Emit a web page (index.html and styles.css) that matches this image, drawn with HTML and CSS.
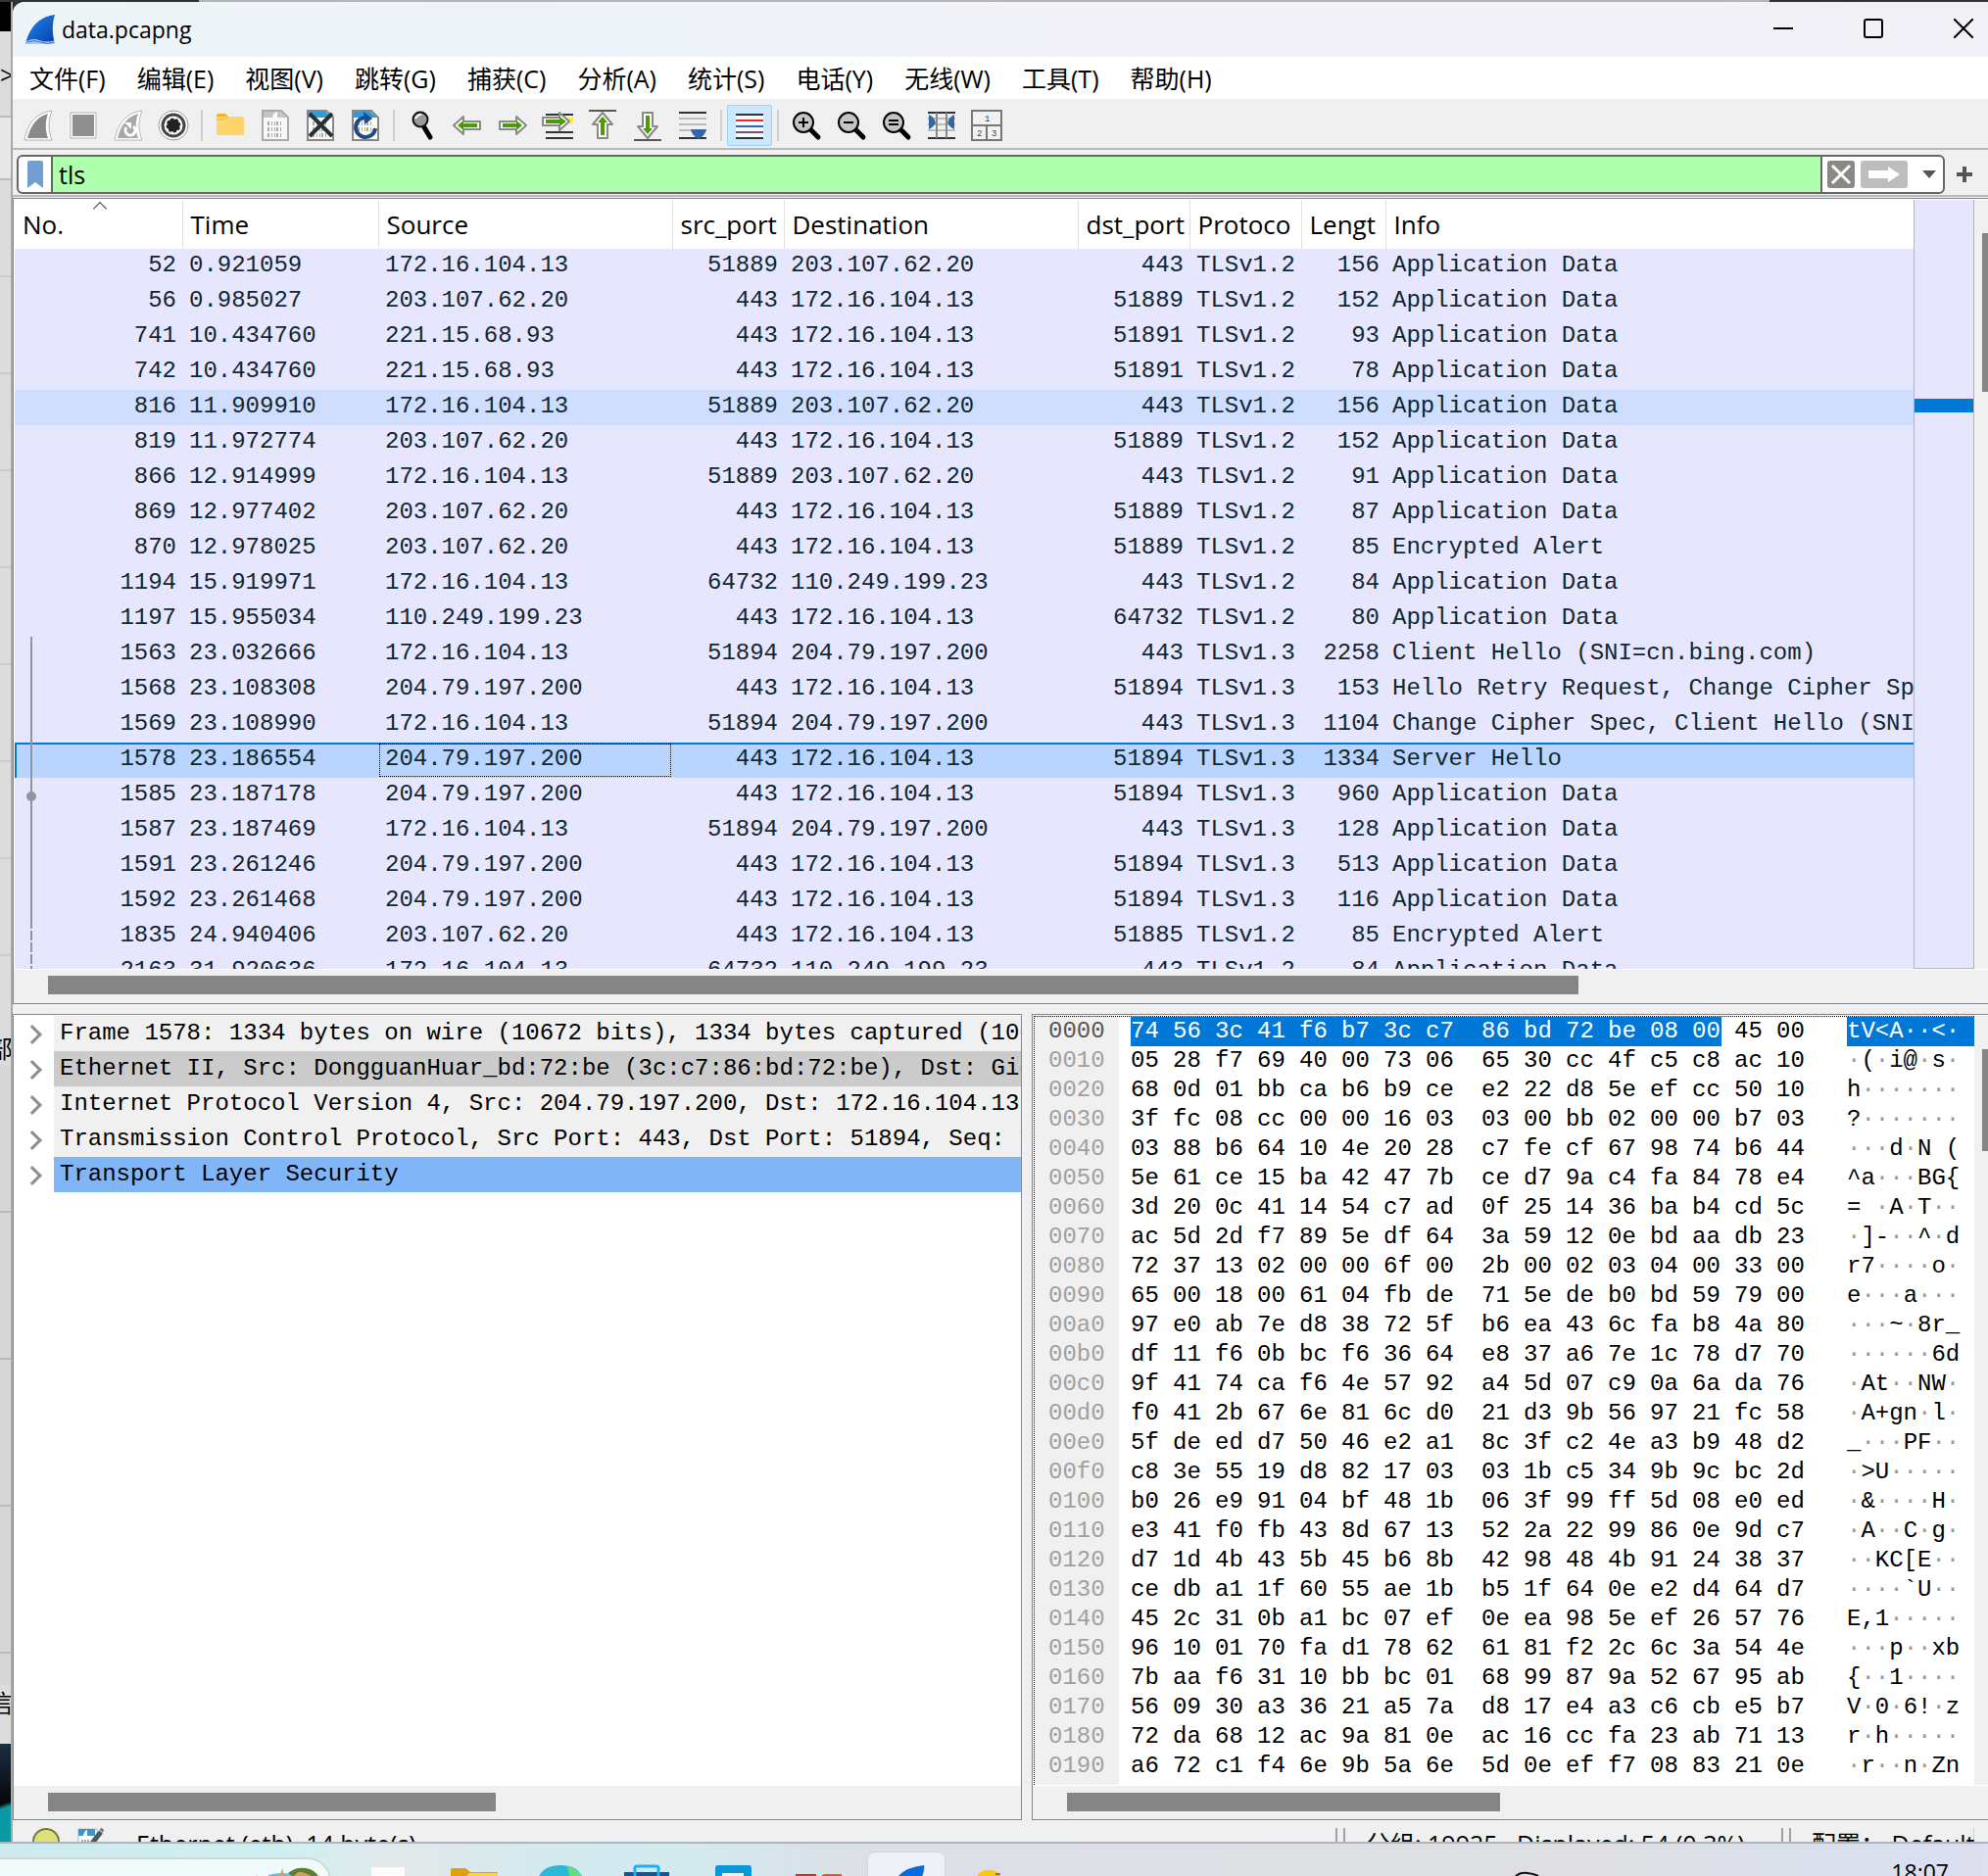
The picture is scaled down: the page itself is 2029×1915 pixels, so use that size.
FILE: index.html
```html
<!DOCTYPE html>
<html lang="zh-CN">
<head>
    <meta charset="UTF-8">
    <meta name="viewport" content="width=device-width, initial-scale=1.0">
    <title>data.pcapng</title>
    <link rel="stylesheet" href="styles.css">
</head>
<body>
    <div class="desktop">
        <div class="behind">
            <div class="behind-dark"></div>
            <div class="behind-tab">&gt;</div>
            <div class="behind-line"></div>
            <div class="behind-rows"></div>
            <div class="behind-text">部</div>
            <div class="behind-page"></div>
            <div class="behind-text">信</div>
            <div class="behind-photo"></div>
        </div>

        <main class="window">
            <header class="titlebar">
                <svg class="app-icon" viewBox="0 0 32 32">
                    <defs>
                        <linearGradient id="fin" x1="0" y1="0" x2="1" y2="1">
                            <stop offset="0" stop-color="#1c8cf5"/>
                            <stop offset="1" stop-color="#0a3ba8"/>
                        </linearGradient>
                    </defs>
                    <path d="M0 31C4 14 14 2 31 0C28 9 28 20 31 31Z" fill="url(#fin)"/>
                    <path d="M1 28Q8 24 15 27T31 27V31H0Z" fill="#a9c6ef"/>
                    <path d="M2 29Q9 26 16 29T30 29" fill="none" stroke="#3c6fd0"/>
                </svg>
                <h1>data.pcapng</h1>
                <div class="window-buttons">
                    <button aria-label="最小化"><svg viewBox="0 0 20 20"><path d="M0 10H20" stroke="#000" stroke-width="2"/></svg></button>
                    <button aria-label="最大化"><svg viewBox="0 0 20 20"><rect x="1" y="1" width="18" height="18" rx="2" fill="none" stroke="#000" stroke-width="2"/></svg></button>
                    <button aria-label="关闭"><svg viewBox="0 0 20 20"><path d="M0 0L20 20M20 0L0 20" stroke="#000" stroke-width="2"/></svg></button>
                </div>
            </header>

            <nav class="menubar">
                <button>文件(F)</button>
                <button>编辑(E)</button>
                <button>视图(V)</button>
                <button>跳转(G)</button>
                <button>捕获(C)</button>
                <button>分析(A)</button>
                <button>统计(S)</button>
                <button>电话(Y)</button>
                <button>无线(W)</button>
                <button>工具(T)</button>
                <button>帮助(H)</button>
            </nav>

            <div class="toolbar">
                <button aria-label="开始捕获"><svg viewBox="0 0 32 32"><path d="M2 31C5 14 14 3 30 1C26 11 26 21 30 31Z" fill="#fff" stroke="#b0b0b0"/><path d="M5 29C8 16 15 7 26 4C23 12 23 21 26 29Z" fill="#8a8a8a"/></svg></button>
                <button aria-label="停止捕获"><svg viewBox="0 0 32 32"><rect x="3" y="3" width="26" height="26" fill="#fff" stroke="#b0b0b0"/><rect x="5" y="5" width="22" height="22" fill="#8f8f8f"/></svg></button>
                <button aria-label="重新开始"><svg viewBox="0 0 32 32"><path d="M2 31C5 14 14 3 30 1C26 11 26 21 30 31Z" fill="#fff" stroke="#b8b8b8"/><path d="M5 29C8 16 15 7 26 4C23 12 23 21 26 29Z" fill="#a8a8a8"/><path d="M14 18A5 5 0 1 0 21 17" fill="none" stroke="#fff" stroke-width="3"/><path d="M12 13H19V20Z" fill="#fff"/></svg></button>
                <button aria-label="捕获选项"><svg viewBox="0 0 32 32"><circle cx="16" cy="16" r="15" fill="#fff" stroke="#9a9a9a"/><circle cx="16" cy="16" r="12.5" fill="#444"/><circle cx="16" cy="16" r="8.5" fill="#222" stroke="#fff" stroke-width="2"/><circle cx="16" cy="16" r="7.5" fill="none" stroke="#fff" stroke-width="2" stroke-dasharray="2.5 3.39"/></svg></button>
                <span class="separator"></span>
                <button aria-label="打开"><svg viewBox="0 0 32 32"><path d="M2 6Q2 4 4 4H11L14 7V12H2Z" fill="#f5b325"/><rect x="2" y="7" width="28" height="19" rx="1" fill="#fdd56b"/><path d="M2 10H10L14 7" fill="none" stroke="#f3b63b"/></svg></button>
                <button aria-label="保存"><svg viewBox="0 0 32 32"><path d="M3 1H22L29 8V31H3Z" fill="#f8f8f8" stroke="#aaa" stroke-width="2"/><path d="M4 2H21L28 8H4Z" fill="#c4c4c4"/><path d="M13 8Q14 3 18 2V8Z" fill="#fff"/><g fill="none" stroke="#aaa" stroke-width="4" stroke-dasharray="2 2 1 2 1 1"><path d="M8 14H24"/><path d="M8 20H24"/><path d="M8 26H24"/></g></svg></button>
                <button aria-label="关闭文件"><svg viewBox="0 0 32 32"><path d="M3 1H22L29 8V31H3Z" fill="#fcfcf0" stroke="#888" stroke-width="2"/><path d="M4 2H21L28 8H4Z" fill="#2e9bd8"/><g fill="none" stroke="#aaa" stroke-width="4" stroke-dasharray="2 2 1 2 1 1"><path d="M8 14H24"/><path d="M8 20H24"/><path d="M8 26H24"/></g><path d="M5 4L28 27M28 4L5 27" stroke="#263238" stroke-width="4"/></svg></button>
                <button aria-label="重新加载"><svg viewBox="0 0 32 32"><path d="M3 1H22L29 8V31H3Z" fill="#fcfcf0" stroke="#888" stroke-width="2"/><path d="M4 2H21L28 8H4Z" fill="#2e9bd8"/><g fill="none" stroke="#aaa" stroke-width="4" stroke-dasharray="2 2 1 2 1 1"><path d="M8 14H24"/><path d="M8 20H24"/></g><path d="M17 8A10 10 0 1 0 26 19" fill="none" stroke="#204a87" stroke-width="4"/><path d="M14 2L23 9L15 15Z" fill="#204a87"/></svg></button>
                <span class="separator"></span>
                <button aria-label="查找"><svg viewBox="0 0 32 32"><path d="M18 18L24 28" stroke="#000" stroke-width="5" stroke-linecap="round"/><circle cx="14" cy="10" r="7.5" fill="#999" stroke="#111" stroke-width="2"/><path d="M9 9Q11 5 15 5" fill="none" stroke="#fff" stroke-width="2"/></svg></button>
                <button aria-label="上一分组"><svg viewBox="0 0 32 32"><path d="M2 16L12 7V12H29V20H12V25Z" fill="#fff" stroke="#888a85" stroke-width="2" stroke-linejoin="round"/><path d="M6 16L12 11V14H26V18H12V21Z" fill="#4e9a06"/></svg></button>
                <button aria-label="下一分组"><svg viewBox="0 0 32 32"><path d="M30 16L20 7V12H3V20H20V25Z" fill="#fff" stroke="#888a85" stroke-width="2" stroke-linejoin="round"/><path d="M26 16L20 11V14H6V18H20V21Z" fill="#4e9a06"/></svg></button>
                <button aria-label="转到分组"><svg viewBox="0 0 32 32"><path d="M4 5H32M4 23H32M4 29H32" stroke="#2e3436" stroke-width="2"/><rect x="22" y="8" width="10" height="6" fill="#fce94f"/><path d="M28 12L18 3V8H1V16H18V21Z" fill="#fff" stroke="#888a85" stroke-width="2" stroke-linejoin="round"/><path d="M25 12L18 7V10H4V14H18V17Z" fill="#4e9a06"/></svg></button>
                <button aria-label="首个分组"><svg viewBox="0 0 32 32"><path d="M2 1H30" stroke="#555753" stroke-width="2"/><path d="M16 3L26 15H21V29H11V15H6Z" fill="#fff" stroke="#888a85" stroke-width="2" stroke-linejoin="round"/><path d="M16 7L21 13H18V26H14V13H11Z" fill="#4e9a06"/></svg></button>
                <button aria-label="最后分组"><svg viewBox="0 0 32 32"><path d="M2 31H30" stroke="#555753" stroke-width="2"/><path d="M16 29L26 17H21V3H11V17H6Z" fill="#fff" stroke="#888a85" stroke-width="2" stroke-linejoin="round"/><path d="M16 25L21 19H18V6H14V19H11Z" fill="#4e9a06"/></svg></button>
                <button aria-label="自动滚动"><svg viewBox="0 0 32 32"><path d="M2 3H30M2 29H30" stroke="#2e3436" stroke-width="2"/><path d="M2 9H30M2 15H30M2 21H30" stroke="#babdb6" stroke-width="2"/><path d="M14 20H30Q29 26 22 30Q15 26 14 20Z" fill="#3465a4"/></svg></button>
                <span class="separator"></span>
                <button class="checked" aria-label="着色"><svg viewBox="0 0 32 32"><rect x="2" y="4" width="28" height="26" fill="#f4f9fd"/><path d="M2 5H30M2 29H30" stroke="#2e3436" stroke-width="2"/><path d="M2 11H30" stroke="#ef2929" stroke-width="2"/><path d="M2 17H30" stroke="#3465a4" stroke-width="2"/><path d="M2 23H30" stroke="#75507b" stroke-width="2"/></svg></button>
                <span class="separator"></span>
                <button aria-label="放大"><svg viewBox="0 0 32 32"><path d="M20 20L28 28" stroke="#000" stroke-width="5" stroke-linecap="round"/><circle cx="13" cy="13" r="10" fill="#c4c4c4" stroke="#000" stroke-width="2"/><path d="M8 13H18M13 8V18" stroke="#000" stroke-width="2"/></svg></button>
                <button aria-label="缩小"><svg viewBox="0 0 32 32"><path d="M20 20L28 28" stroke="#000" stroke-width="5" stroke-linecap="round"/><circle cx="13" cy="13" r="10" fill="#c4c4c4" stroke="#000" stroke-width="2"/><path d="M8 13H18" stroke="#000" stroke-width="2"/></svg></button>
                <button aria-label="正常大小"><svg viewBox="0 0 32 32"><path d="M20 20L28 28" stroke="#000" stroke-width="5" stroke-linecap="round"/><circle cx="13" cy="13" r="10" fill="#c4c4c4" stroke="#000" stroke-width="2"/><path d="M8 11H18M8 15H18" stroke="#000" stroke-width="2"/></svg></button>
                <button aria-label="调整列宽"><svg viewBox="0 0 32 32"><path d="M2 9H30M2 15H30M2 21H30" stroke="#babdb6" stroke-width="2"/><path d="M2 3H30M2 29H30" stroke="#2e3436" stroke-width="2"/><path d="M11 3V29M21 3V29" stroke="#888a85" stroke-width="2"/><path d="M3 5Q8 7 10 13Q8 18 3 20ZM29 5Q24 7 22 13Q24 18 29 20Z" fill="#3465a4"/></svg></button>
                <button aria-label="布局"><svg viewBox="0 0 32 32"><path d="M1 1H31V31H1ZM1 16H31M16 16V31" fill="#f2f2f2" stroke="#777" stroke-width="2"/><text x="14" y="12">1</text><text x="6" y="27">2</text><text x="21" y="27">3</text></svg></button>
            </div>

            <form class="filterbar">
                <div class="filter-box">
                    <button type="button" class="bookmark" aria-label="书签"><svg viewBox="0 0 16 28"><path d="M0 2Q0 0 2 0H14Q16 0 16 2V28L8 22L0 28Z" fill="#729fcf"/></svg></button>
                    <input type="text" value="tls" aria-label="显示过滤器">
                    <button type="button" class="clear" aria-label="清除"><svg viewBox="0 0 28 28"><rect width="28" height="28" rx="3" fill="#888a85"/><path d="M5 5L23 23M23 5L5 23" stroke="#fff" stroke-width="3"/></svg></button>
                    <button type="button" class="apply" aria-label="应用"><svg viewBox="0 0 48 28"><rect width="48" height="28" rx="3" fill="#bdbdbd"/><path d="M8 10H28V6L40 14L28 22V18H8Z" fill="#fff"/></svg></button>
                    <button type="button" class="history" aria-label="历史"><svg viewBox="0 0 14 8"><path d="M0 0H14L7 8Z" fill="#555"/></svg></button>
                </div>
                <button type="button" class="add" aria-label="添加"><svg viewBox="0 0 16 16"><path d="M8 0V16M0 8H16" stroke="#555" stroke-width="4"/></svg></button>
            </form>

            <div class="panes">
                <section class="pane packet-pane">
                    <div class="pane-view">
                        <div class="packet-list">
                            <table>
                                <colgroup>
                                    <col class="c-no"><col class="c-time"><col class="c-addr"><col class="c-port"><col class="c-addr"><col class="c-port"><col class="c-proto"><col class="c-len"><col>
                                </colgroup>
                                <thead>
                                    <tr><th class="sorted">No.</th><th>Time</th><th>Source</th><th>src_port</th><th>Destination</th><th>dst_port</th><th>Protoco</th><th>Lengt</th><th>Info</th></tr>
                                </thead>
                                <tbody id="packets"></tbody>
                            </table>
                            <svg class="related" viewBox="0 0 12 340">
                                <path d="M6 0V298" stroke="#8b979c" stroke-width="2"/>
                                <path d="M6 300V340" stroke="#8b979c" stroke-width="2" stroke-dasharray="10 2"/>
                                <circle cx="6" cy="163" r="5" fill="#8b979c"/>
                            </svg>
                        </div>
                        <div class="minimap"><span></span></div>
                        <div class="vscroll packet-vscroll"><span></span></div>
                    </div>
                    <div class="hscroll packet-hscroll"><span></span></div>
                </section>

                <div class="lower">
                    <section class="pane">
                        <ul class="tree">
                            <li><button>Frame 1578: 1334 bytes on wire (10672 bits), 1334 bytes captured (10672 bits)</button></li>
                            <li class="hovered"><button>Ethernet II, Src: DongguanHuar_bd:72:be (3c:c7:86:bd:72:be), Dst: Giga</button></li>
                            <li><button>Internet Protocol Version 4, Src: 204.79.197.200, Dst: 172.16.104.13</button></li>
                            <li><button>Transmission Control Protocol, Src Port: 443, Dst Port: 51894, Seq: 1</button></li>
                            <li class="selected"><button>Transport Layer Security</button></li>
                        </ul>
                        <div class="hscroll tree-hscroll"><span></span></div>
                    </section>
                    <section class="pane">
                        <div class="pane-view">
                            <div class="hex">
                                <table id="bytes"></table>
                            </div>
                            <div class="vscroll hex-vscroll"><span></span></div>
                        </div>
                        <div class="hscroll hex-hscroll"><span></span></div>
                    </section>
                </div>
            </div>

            <footer class="statusbar">
                <svg class="expert" viewBox="0 0 28 28"><circle cx="14" cy="14" r="13" fill="#dfe07a" stroke="#77784a" stroke-width="2"/></svg>
                <svg class="comment" viewBox="0 0 28 28"><path d="M1 1H20V27H1Z" fill="#fff" stroke="#bbb"/><path d="M1 1H18V8H1Z" fill="#2e9bd8"/><path d="M6 8Q7 3 10 2V8Z" fill="#fff"/><path d="M4 13H12M4 17H12" stroke="#aaa" stroke-width="2" stroke-dasharray="2 1"/><path d="M13 18L24 4" stroke="#555" stroke-width="5"/><path d="M24 3L26 1" stroke="#777" stroke-width="4"/></svg>
                <span class="status-text">Ethernet (eth), 14 byte(s)</span>
                <span class="status-packets">分组: 19925 · Displayed: 54 (0.3%)</span>
                <span class="status-profile">配置： Default</span>
            </footer>
        </main>
    </div>

    <div class="taskbar">
        <div class="search"><svg viewBox="0 0 70 16"><path d="M0 16L4 8L8 16Z" fill="#c98a52"/><path d="M16 8Q30 4 44 8V16H16Z" fill="#6fbccb"/><path d="M36 6Q46 -2 58 2Q66 5 68 12H44Z" fill="#5b7f2e"/><path d="M26 16L30 1L34 16ZM38 16Q44 3 50 5Q62 8 66 16Z" fill="#d39a63"/></svg></div>
        <div class="apps">
            <svg viewBox="0 0 50 25"><path d="M8 16H42V25H8Z" fill="#fbfbfb"/></svg>
            <svg viewBox="0 0 50 25"><path d="M1 19Q1 17 3 17H16L21 21H49V25H1Z" fill="#dfa00a"/><path d="M20 22H49V25H17Z" fill="#ffd04d"/></svg>
            <svg viewBox="0 0 50 25"><path d="M3 25Q9 14 25 14Q41 14 47 25Z" fill="#2fb8d6"/><path d="M32 15Q43 18 47 25H34Z" fill="#5fe07c"/></svg>
            <svg viewBox="0 0 50 25"><path d="M2 21H48V25H2Z" fill="#0b57a4"/><path d="M13 25V17Q13 15 15 15H35Q37 15 37 17V25" fill="none" stroke="#1fb0f5" stroke-width="3"/></svg>
            <svg viewBox="0 0 50 25"><path d="M7 25V17Q7 14 10 14H41Q44 14 44 17V25Z" fill="#0a99d8"/><path d="M14 25V22H36V25Z" fill="#e6f4fa"/></svg>
            <svg viewBox="0 0 50 25"><path d="M1 23H22V25H1Z" fill="#f21d1d"/><path d="M27 25L30 23H48V25Z" fill="#f2521d"/></svg>
            <div class="active-app"><svg viewBox="0 0 50 25"><path d="M16 25Q24 15 43 13Q44 16 41 25Z" fill="#0a6bdc"/></svg></div>
            <svg viewBox="0 0 50 25"><path d="M8 25Q11 19 20 19Q29 19 32 25Z" fill="#fcc60a"/><path d="M27 23H32" stroke="#222"/></svg>
        </div>
        <svg class="tray" viewBox="0 0 30 25"><path d="M3 25Q8 21 15 22Q22 23 26 25" fill="none" stroke="#111" stroke-width="2"/></svg>
        <time>18:07</time>
    </div>

    <script>
        // no, time, source, src port, destination, dst port, protocol, length, info
        const packets = [
            [52, '0.921059', '172.16.104.13', 51889, '203.107.62.20', 443, 'TLSv1.2', 156, 'Application Data'],
            [56, '0.985027', '203.107.62.20', 443, '172.16.104.13', 51889, 'TLSv1.2', 152, 'Application Data'],
            [741, '10.434760', '221.15.68.93', 443, '172.16.104.13', 51891, 'TLSv1.2', 93, 'Application Data'],
            [742, '10.434760', '221.15.68.93', 443, '172.16.104.13', 51891, 'TLSv1.2', 78, 'Application Data'],
            [816, '11.909910', '172.16.104.13', 51889, '203.107.62.20', 443, 'TLSv1.2', 156, 'Application Data'],
            [819, '11.972774', '203.107.62.20', 443, '172.16.104.13', 51889, 'TLSv1.2', 152, 'Application Data'],
            [866, '12.914999', '172.16.104.13', 51889, '203.107.62.20', 443, 'TLSv1.2', 91, 'Application Data'],
            [869, '12.977402', '203.107.62.20', 443, '172.16.104.13', 51889, 'TLSv1.2', 87, 'Application Data'],
            [870, '12.978025', '203.107.62.20', 443, '172.16.104.13', 51889, 'TLSv1.2', 85, 'Encrypted Alert'],
            [1194, '15.919971', '172.16.104.13', 64732, '110.249.199.23', 443, 'TLSv1.2', 84, 'Application Data'],
            [1197, '15.955034', '110.249.199.23', 443, '172.16.104.13', 64732, 'TLSv1.2', 80, 'Application Data'],
            [1563, '23.032666', '172.16.104.13', 51894, '204.79.197.200', 443, 'TLSv1.3', 2258, 'Client Hello (SNI=cn.bing.com)'],
            [1568, '23.108308', '204.79.197.200', 443, '172.16.104.13', 51894, 'TLSv1.3', 153, 'Hello Retry Request, Change Cipher Spec'],
            [1569, '23.108990', '172.16.104.13', 51894, '204.79.197.200', 443, 'TLSv1.3', 1104, 'Change Cipher Spec, Client Hello (SNI=cn.bing.com)'],
            [1578, '23.186554', '204.79.197.200', 443, '172.16.104.13', 51894, 'TLSv1.3', 1334, 'Server Hello'],
            [1585, '23.187178', '204.79.197.200', 443, '172.16.104.13', 51894, 'TLSv1.3', 960, 'Application Data'],
            [1587, '23.187469', '172.16.104.13', 51894, '204.79.197.200', 443, 'TLSv1.3', 128, 'Application Data'],
            [1591, '23.261246', '204.79.197.200', 443, '172.16.104.13', 51894, 'TLSv1.3', 513, 'Application Data'],
            [1592, '23.261468', '204.79.197.200', 443, '172.16.104.13', 51894, 'TLSv1.3', 116, 'Application Data'],
            [1835, '24.940406', '203.107.62.20', 443, '172.16.104.13', 51885, 'TLSv1.2', 85, 'Encrypted Alert'],
            [2163, '31.920636', '172.16.104.13', 64732, '110.249.199.23', 443, 'TLSv1.2', 84, 'Application Data']
        ];
        const rightAligned = [0, 3, 5, 7];
        const rowClass = { 816: 'hovered', 1578: 'selected' };

        document.getElementById('packets').innerHTML = packets.map(packet => {
            const cells = packet.map((value, i) => `<td${rightAligned.includes(i) ? ' class="num"' : ''}>${value}</td>`);
            return `<tr class="${rowClass[packet[0]] || ''}">${cells.join('')}</tr>`;
        }).join('');

        const dump = [
            ['74 56 3c 41 f6 b7 3c c7 86 bd 72 be 08 00 45 00', 'tV<A··<·'],
            ['05 28 f7 69 40 00 73 06 65 30 cc 4f c5 c8 ac 10', '·(·i@·s· e'],
            ['68 0d 01 bb ca b6 b9 ce e2 22 d8 5e ef cc 50 10', 'h·······'],
            ['3f fc 08 cc 00 00 16 03 03 00 bb 02 00 00 b7 03', '?·······'],
            ['03 88 b6 64 10 4e 20 28 c7 fe cf 67 98 74 b6 44', '···d·N ('],
            ['5e 61 ce 15 ba 42 47 7b ce d7 9a c4 fa 84 78 e4', '^a···BG{'],
            ['3d 20 0c 41 14 54 c7 ad 0f 25 14 36 ba b4 cd 5c', '= ·A·T··'],
            ['ac 5d 2d f7 89 5e df 64 3a 59 12 0e bd aa db 23', '·]-··^·d'],
            ['72 37 13 02 00 00 6f 00 2b 00 02 03 04 00 33 00', 'r7····o· +'],
            ['65 00 18 00 61 04 fb de 71 5e de b0 bd 59 79 00', 'e···a··· q'],
            ['97 e0 ab 7e d8 38 72 5f b6 ea 43 6c fa b8 4a 80', '···~·8r_'],
            ['df 11 f6 0b bc f6 36 64 e8 37 a6 7e 1c 78 d7 70', '······6d'],
            ['9f 41 74 ca f6 4e 57 92 a4 5d 07 c9 0a 6a da 76', '·At··NW·'],
            ['f0 41 2b 67 6e 81 6c d0 21 d3 9b 56 97 21 fc 58', '·A+gn·l·'],
            ['5f de ed d7 50 46 e2 a1 8c 3f c2 4e a3 b9 48 d2', '_···PF··'],
            ['c8 3e 55 19 d8 82 17 03 03 1b c5 34 9b 9c bc 2d', '·>U·····'],
            ['b0 26 e9 91 04 bf 48 1b 06 3f 99 ff 5d 08 e0 ed', '·&····H·'],
            ['e3 41 f0 fb 43 8d 67 13 52 2a 22 99 86 0e 9d c7', '·A··C·g· R'],
            ['d7 1d 4b 43 5b 45 b6 8b 42 98 48 4b 91 24 38 37', '··KC[E·· B'],
            ['ce db a1 1f 60 55 ae 1b b5 1f 64 0e e2 d4 64 d7', '····`U··'],
            ['45 2c 31 0b a1 bc 07 ef 0e ea 98 5e ef 26 57 76', 'E,1·····'],
            ['96 10 01 70 fa d1 78 62 61 81 f2 2c 6c 3a 54 4e', '···p··xb a'],
            ['7b aa f6 31 10 bb bc 01 68 99 87 9a 52 67 95 ab', '{··1···· h'],
            ['56 09 30 a3 36 21 a5 7a d8 17 e4 a3 c6 cb e5 b7', 'V·0·6!·z'],
            ['72 da 68 12 ac 9a 81 0e ac 16 cc fa 23 ab 71 13', 'r·h·····'],
            ['a6 72 c1 f4 6e 9b 5a 6e 5d 0e ef f7 08 83 21 0e', '·r··n·Zn']
        ];
        const markedBytes = 14; // Ethernet header

        function escapeText(text) {
            return text.replace(/&/g, '&amp;').replace(/</g, '&lt;').replace(/>/g, '&gt;');
        }

        document.getElementById('bytes').innerHTML = dump.map(([hex, ascii], row) => {
            const offset = (row * 16).toString(16).padStart(4, '0');
            const cells = hex.split(' ').map((byte, i) => {
                const marked = row === 0 && i < markedBytes;
                return `<td class="byte${marked ? ' marked' : ''}">${byte}</td>`;
            });
            const text = escapeText(ascii).replace(/·+/g, dots => `<i>${dots}</i>`);
            return `<tr><th scope="row">${offset}</th>${cells.join('')}<td class="ascii">${text}</td></tr>`;
        }).join('');
    </script>
</body>
</html>
```
FILE: styles.css
```css
* {
    box-sizing: border-box;
}
body {
    margin: 0;
    height: 100vh;
    overflow: hidden;
    display: flex;
    flex-direction: column;
    background: #b0b0b0;
    font-family: 'Open Sans', 'Noto Sans CJK SC', sans-serif;
    font-size: 25px;
    color: #000;
}
button {
    margin: 0;
    padding: 0;
    border: none;
    background: none;
    font: inherit;
    color: inherit;
    display: flex;
    align-items: center;
    justify-content: center;
}
svg {
    display: block;
    flex: none;
}
.desktop {
    flex: 1;
    min-height: 0;
    display: flex;
    padding-top: 2px;
    background: linear-gradient(to right, #333 0, #333 10%, #b4b4b4 10%, #b4b4b4 89%, #333 89%);
}

/* sliver of the window underneath */
.behind {
    width: 13px;
    flex: none;
    overflow: hidden;
    display: flex;
    flex-direction: column;
    background: #dcdcdc;
    border-right: 2px solid #a8a8a8;
}
.behind-dark {
    height: 30px;
    background: #000;
}
.behind-tab {
    height: 88px;
    line-height: 88px;
    border-bottom: 2px solid #bbb;
}
.behind-line {
    height: 64px;
    background: #e8e8e8;
    border-bottom: 2px solid #bbb;
}
.behind-rows {
    flex: 866;
    background: repeating-linear-gradient(to bottom, #dcdcdc 0, #dcdcdc 97px, #ccc 97px, #ccc 99px);
}
.behind-text {
    height: 36px;
    line-height: 36px;
    width: 24px;
    margin-left: -12px;
}
.behind-page {
    flex: 630;
    background: repeating-linear-gradient(to bottom, #d6d6d6 0, #d6d6d6 148px, #bbb 148px, #bbb 150px);
}
.behind-photo {
    height: 124px;
    border-top: 24px solid #dcdcdc;
    background: linear-gradient(160deg, #1c2f44 0, #05070a 60%, #0a9aa6 65%);
}

.window {
    flex: 1;
    min-width: 0;
    display: flex;
    flex-direction: column;
    background: #f0f0f0;
    border-radius: 12px 0 0 0;
    overflow: hidden;
}
.titlebar {
    height: 56px;
    flex: none;
    display: flex;
    align-items: center;
    padding-left: 13px;
    background: linear-gradient(to right, #edf5f8, #eef2fa 30%, #f3f2f8 60%, #f2f1f7);
}
.app-icon {
    width: 31px;
    height: 31px;
}
.titlebar h1 {
    flex: 1;
    margin: 0 0 0 6px;
    font-size: 23px;
    font-weight: normal;
}
.window-buttons {
    display: flex;
}
.window-buttons button {
    width: 92px;
    height: 56px;
    padding-bottom: 2px;
}
.window-buttons button:last-child {
    width: 71px;
    justify-content: flex-start;
    padding-left: 36px;
}
.window-buttons svg {
    width: 20px;
    height: 20px;
}
.menubar {
    height: 45px;
    flex: none;
    display: flex;
    padding-left: 1px;
    background: #fff;
    border-bottom: 2px solid #f0f0f0;
}
.menubar button {
    padding: 0 16px 2px;
    white-space: nowrap;
}
.toolbar {
    height: 50px;
    flex: none;
    display: flex;
    align-items: center;
    padding: 1px 0 0 3px;
    border-bottom: 2px solid #b8b8b8;
}
.toolbar button {
    width: 46px;
    height: 42px;
    border: 1px solid transparent;
    border-radius: 2px;
}
.toolbar svg {
    width: 32px;
    height: 32px;
}
.toolbar text {
    font-family: 'Liberation Mono', monospace;
    font-size: 9px;
    fill: #444;
}
.toolbar .checked {
    background: #cce8ff;
    border-color: #99d1ff;
}
.separator {
    width: 2px;
    height: 32px;
    margin: 0 5px;
    background: #d0d0d0;
}
.filterbar {
    height: 48px;
    flex: none;
    display: flex;
    align-items: center;
    margin: 0 0 1px;
    padding: 4px 16px 0 4px;
    border-bottom: 2px solid #b8b8b8;
}
.filter-box {
    flex: 1;
    height: 40px;
    display: flex;
    align-items: center;
    overflow: hidden;
    border: 2px solid #666;
    border-radius: 6px;
    background: #fff;
}
.bookmark {
    width: 35px;
    height: 36px;
    border-right: 2px solid #666;
}
.bookmark svg {
    width: 16px;
    height: 28px;
}
.filter-box input {
    flex: 1;
    min-width: 0;
    height: 36px;
    margin-right: 5px;
    padding: 0 6px;
    border: none;
    outline: 0;
    border-right: 2px solid #666;
    background: #afffaf;
    font: inherit;
}
.clear svg {
    width: 28px;
    height: 28px;
}
.apply {
    margin-left: 6px;
}
.apply svg {
    width: 48px;
    height: 28px;
}
.history {
    width: 36px;
    height: 36px;
    padding-left: 8px;
}
.history svg {
    width: 14px;
    height: 8px;
}
.add {
    margin-left: 12px;
}
.add svg {
    width: 16px;
    height: 16px;
}

.panes {
    flex: 1;
    min-height: 0;
    display: grid;
    grid-template-rows: minmax(0, 1fr) minmax(0, 1fr);
    gap: 10px;
    font-family: 'Liberation Mono', 'Noto Sans CJK SC', monospace;
    font-size: 24px;
}
.lower {
    display: grid;
    grid-template-columns: minmax(0, 1030fr) minmax(0, 976fr);
    gap: 10px;
}
.pane {
    min-height: 0;
    display: flex;
    flex-direction: column;
    border: 1px solid #828790;
    background: #fff;
    overflow: hidden;
}
.packet-pane,
.lower .pane:last-child {
    border-right: none;
}
.pane-view {
    flex: 1;
    min-height: 0;
    display: flex;
    padding: 1px 0 1px 1px;
}
.packet-list {
    position: relative;
    flex: 1;
    min-width: 0;
    overflow: hidden;
    background: #e7e6ff;
}
table {
    border-collapse: collapse;
}
.packet-list table {
    width: 100%;
    table-layout: fixed;
}
.c-no { width: 171px; }
.c-time { width: 200px; }
.c-addr { width: 300px; }
.c-port, .c-proto { width: 114px; }
.c-len { width: 86px; }
.packet-list th {
    height: 50px;
    padding: 0 4px 0 8px;
    border-right: 1px solid #e0e0e0;
    background: #fff;
    font-family: 'Open Sans', sans-serif;
    font-size: 26px;
    font-weight: normal;
    line-height: 36px;
    text-align: left;
    white-space: nowrap;
    overflow: hidden;
}
.packet-list th:last-child {
    border-right: none;
}
.sorted {
    position: relative;
}
.sorted::after {
    content: '';
    position: absolute;
    top: 4px;
    left: 48%;
    width: 9px;
    height: 9px;
    border: 1px solid #444;
    border-width: 1px 0 0 1px;
    transform: rotate(45deg);
}
.packet-list td {
    height: 36px;
    padding: 0 6px 0 7px;
    color: #12272e;
    line-height: 34px;
    white-space: nowrap;
    overflow: hidden;
    vertical-align: top;
}
.packet-list td.num {
    padding-left: 0;
    text-align: right;
}
.packet-list td:last-child {
    padding-right: 0;
}
.packet-list tr.hovered {
    background: #cfdeff;
}
.packet-list tr.selected {
    background: #b8d4ff;
    box-shadow: inset 2px 2px 0 #0078d7;
}
tr.selected td:nth-child(3) {
    outline: 1px dotted #000;
    outline-offset: -2px;
}
/* related-packet line beside the rows */
.related {
    position: absolute;
    left: 11px;
    top: 446px;
    width: 12px;
    height: 340px;
}
.minimap {
    width: 62px;
    padding-top: 203px;
    border: 1px solid #b4b4b4;
    border-top: none;
    background: #e7e6ff;
}
.minimap span {
    display: block;
    height: 14px;
    background: #0078d7;
}
.vscroll {
    width: 14px;
    padding-left: 8px;
    background: #f0f0f0;
}
.vscroll span,
.hscroll span {
    display: block;
    background: #858585;
}
.packet-vscroll {
    padding-top: 34px;
}
.packet-vscroll span {
    height: 162px;
}
.hex-vscroll {
    padding-top: 34px;
}
.hex-vscroll span {
    height: 104px;
}
.hscroll {
    flex: none;
    height: 34px;
    padding-top: 7px;
    padding-left: 35px;
    background: #f0f0f0;
}
.hscroll span {
    height: 19px;
}
.packet-hscroll {
    padding-top: 6px;
    padding-right: 28px;
}
.packet-hscroll span {
    width: 80%;
}
.tree-hscroll span {
    width: 46%;
}
.hex-hscroll span {
    width: 47%;
}

.tree {
    flex: 1;
    margin: 0;
    padding: 1px 0 0 41px;
    list-style: none;
    overflow: hidden;
}
.tree li {
    position: relative;
    height: 36px;
    background: #f0f0f0;
}
.tree li::before {
    content: '';
    position: absolute;
    left: -29px;
    top: 12px;
    width: 11px;
    height: 11px;
    border: 3px solid #8c8c8c;
    border-width: 3px 3px 0 0;
    transform: rotate(45deg);
}
.tree button {
    width: 100%;
    padding-left: 6px;
    justify-content: flex-start;
    line-height: 36px;
    white-space: nowrap;
    overflow: hidden;
}
.tree li.hovered {
    background: #cbcbcb;
}
.tree li.selected {
    background: #80b5f7;
}

.hex {
    flex: 1;
    min-width: 0;
    overflow: hidden;
    border: 1px dotted #000;
    border-width: 1px 0 0 1px;
    background: linear-gradient(to right, #f0f0f0 86px, #fff 86px);
}
.hex table {
    width: 100%;
}
.hex td,
.hex th {
    height: 30px;
    padding: 0;
    line-height: 30px;
    font-weight: normal;
    text-align: left;
    white-space: pre;
}
.hex th {
    min-width: 98px;
    padding-left: 14px;
    color: #a0a0a0;
}
.hex tr:first-child th {
    color: #555;
}
.hex .byte {
    min-width: 43px;
}
.hex .byte:nth-child(9) {
    min-width: 57px;
}
.hex .byte:nth-child(17) {
    min-width: 72px;
}
.hex .marked {
    background: #0078d7;
    color: #fff;
}
.hex .byte:nth-child(15).marked {
    background: linear-gradient(to right, #0078d7 30px, #fff 30px);
}
.hex i {
    color: #999;
    font-style: normal;
}
.hex .ascii {
    width: 100%;
    max-width: 0;
}
.hex tr:first-child .ascii {
    background: #0078d7;
    color: #fff;
}
.hex tr:first-child i {
    color: #fff;
}

.statusbar {
    height: 22px;
    flex: none;
    display: flex;
    align-items: flex-start;
    overflow: hidden;
    padding: 8px 14px 0 20px;
    line-height: 32px;
    white-space: nowrap;
}
.statusbar svg {
    width: 28px;
    height: 28px;
    margin-right: 18px;
}
.status-text {
    flex: 1;
    margin-left: 14px;
    margin-right: 6px;
    border-right: 2px solid #a0a0a0;
}
.status-packets,
.status-profile {
    flex: none;
    padding-left: 21px;
    border-left: 2px solid #a0a0a0;
}
.status-packets {
    width: 449px;
    margin-right: 6px;
    border-right: 2px solid #a0a0a0;
}
.status-profile {
    width: 189px;
    border-right: 1px solid #d0d0d0;
}

.taskbar {
    height: 35px;
    flex: none;
    display: flex;
    align-items: flex-start;
    overflow: hidden;
    border-top: 2px solid #adb5b8;
    background: linear-gradient(to right, #cdebee 0, #d0eff1 15%, #e3e8ea 20%, #d3eaef 28%, #d2ebef 34%, #dcdfe6 43%, #dfdfe2 80%, #d9e0ef 95%, #dedff0);
}
.search {
    width: 338px;
    height: 40px;
    margin-top: 14px;
    padding: 8px 8px 0 0;
    display: flex;
    justify-content: flex-end;
    border: 2px solid #c5dcdf;
    border-left: none;
    border-radius: 0 24px 0 0;
    background: #f2fbfb;
}
.search svg {
    width: 70px;
    height: 16px;
}
.apps {
    display: flex;
    gap: 38px;
    margin: 8px 0 0 33px;
}
.apps svg {
    width: 50px;
    height: 25px;
}
.active-app {
    height: 40px;
    margin: 0 -14px;
    padding: 0 14px;
    border: 1px solid #d2d6e0;
    border-radius: 8px 8px 0 0;
    background: #edf0f6;
}
.tray {
    width: 30px;
    height: 25px;
    margin: 8px 0 0 auto;
}
.taskbar time {
    margin: 16px 40px 0 356px;
    font-size: 23px;
    line-height: 26px;
}
```
